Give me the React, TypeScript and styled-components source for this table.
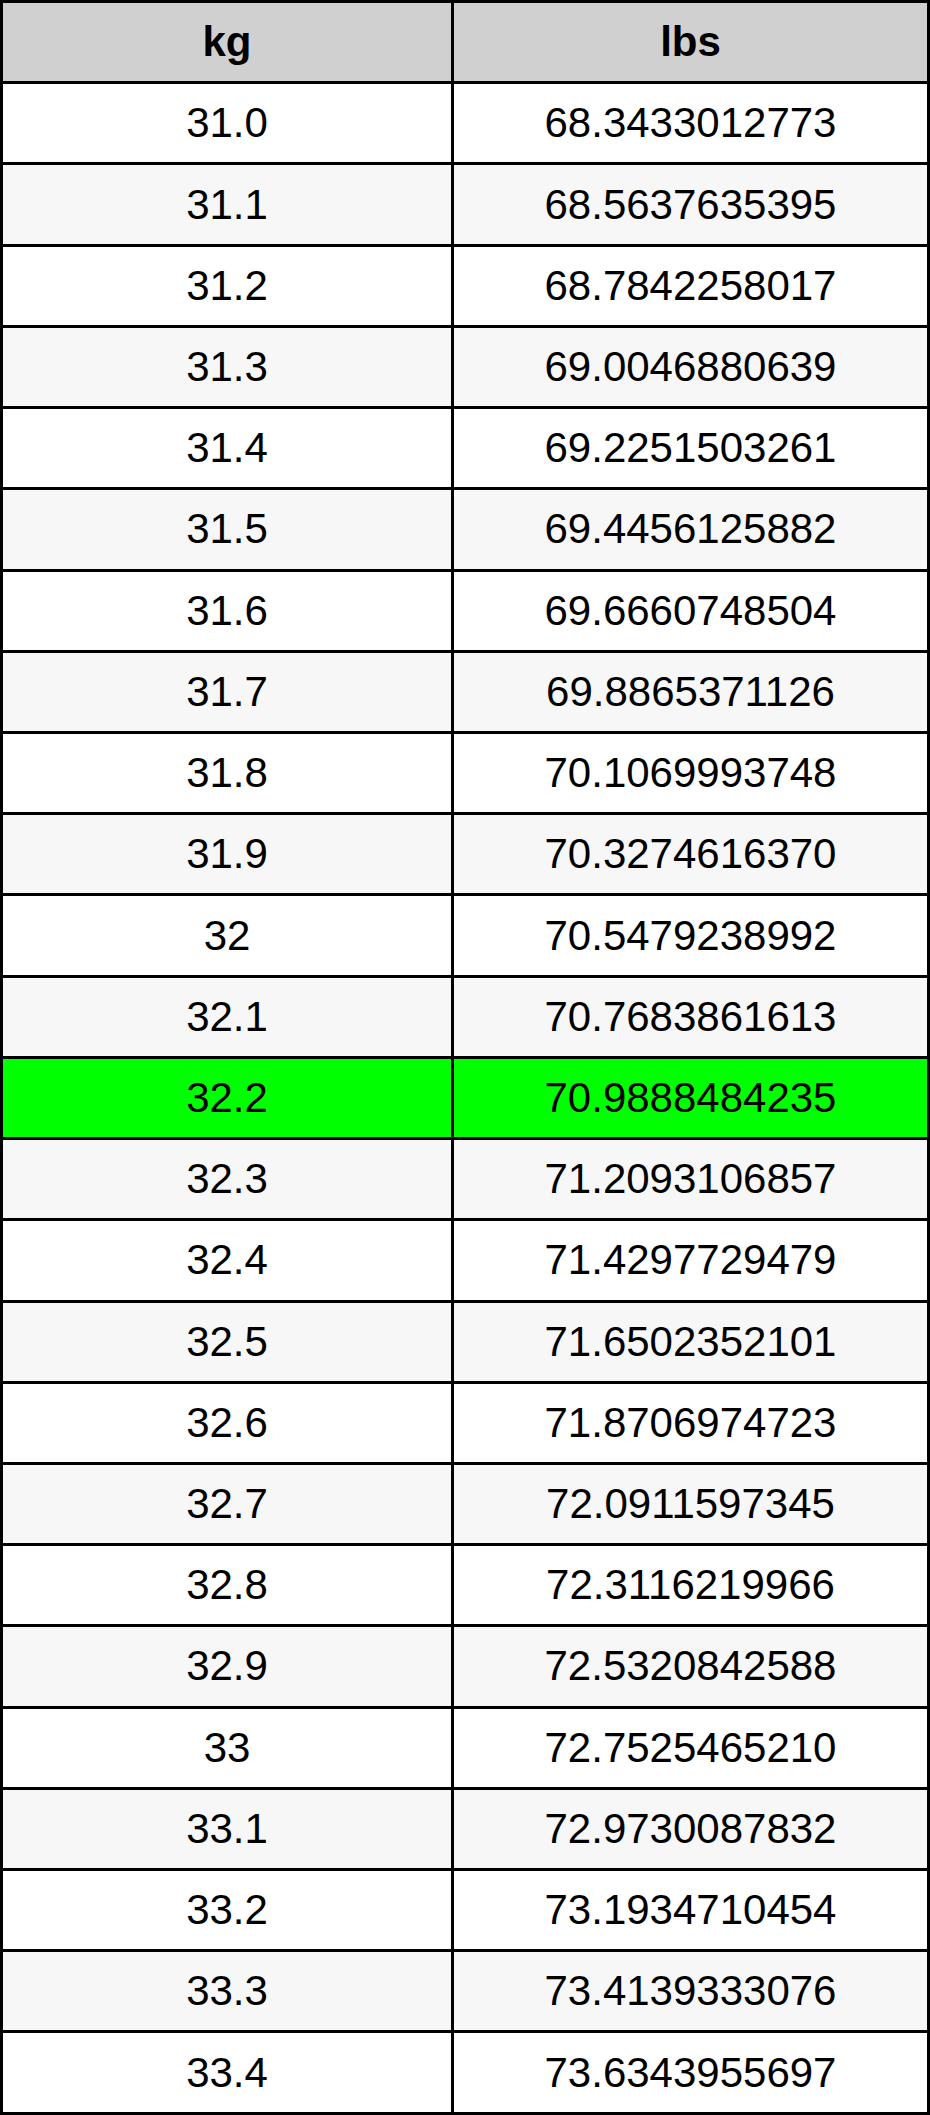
import React from "react";
import styled, { createGlobalStyle } from "styled-components";

const Global = createGlobalStyle`
  html, body { margin: 0; padding: 0; background: #ffffff; }
  body { font-family: "Liberation Sans", Arial, sans-serif; }
`;

const Table = styled.div`
  width: 930px;
  box-sizing: border-box;
  background: #000000;
  padding: 3px;
  display: flex;
  flex-direction: column;
  gap: 3px;
`;

const Row = styled.div`
  display: grid;
  grid-template-columns: 448px 473px;
  gap: 3px;
  height: 78.23px;
`;

type Tone = "head" | "white" | "stripe" | "hit";

const bg: Record<Tone, string> = {
  head: "#d0d0d0",
  white: "#ffffff",
  stripe: "#f7f7f7",
  hit: "#00ff00",
};

const Cell = styled.div<{ $tone: Tone }>`
  background: ${(p) => bg[p.$tone]};
  display: flex;
  align-items: center;
  justify-content: center;
  font-size: 42px;
  font-weight: ${(p) => (p.$tone === "head" ? 700 : 400)};
  color: #000000;
  line-height: 1;
`;

const rows: [string, string][] = [
  ["31.0", "68.3433012773"],
  ["31.1", "68.5637635395"],
  ["31.2", "68.7842258017"],
  ["31.3", "69.0046880639"],
  ["31.4", "69.2251503261"],
  ["31.5", "69.4456125882"],
  ["31.6", "69.6660748504"],
  ["31.7", "69.8865371126"],
  ["31.8", "70.1069993748"],
  ["31.9", "70.3274616370"],
  ["32", "70.5479238992"],
  ["32.1", "70.7683861613"],
  ["32.2", "70.9888484235"],
  ["32.3", "71.2093106857"],
  ["32.4", "71.4297729479"],
  ["32.5", "71.6502352101"],
  ["32.6", "71.8706974723"],
  ["32.7", "72.0911597345"],
  ["32.8", "72.3116219966"],
  ["32.9", "72.5320842588"],
  ["33", "72.7525465210"],
  ["33.1", "72.9730087832"],
  ["33.2", "73.1934710454"],
  ["33.3", "73.4139333076"],
  ["33.4", "73.6343955697"],
];

export default function App() {
  return (
    <>
      <Global />
      <Table>
        <Row>
          <Cell $tone="head">kg</Cell>
          <Cell $tone="head">lbs</Cell>
        </Row>
        {rows.map(([kg, lbs], i) => {
          const tone: Tone = kg === "32.2" ? "hit" : i % 2 === 0 ? "white" : "stripe";
          return (
            <Row key={kg}>
              <Cell $tone={tone}>{kg}</Cell>
              <Cell $tone={tone}>{lbs}</Cell>
            </Row>
          );
        })}
      </Table>
    </>
  );
}
